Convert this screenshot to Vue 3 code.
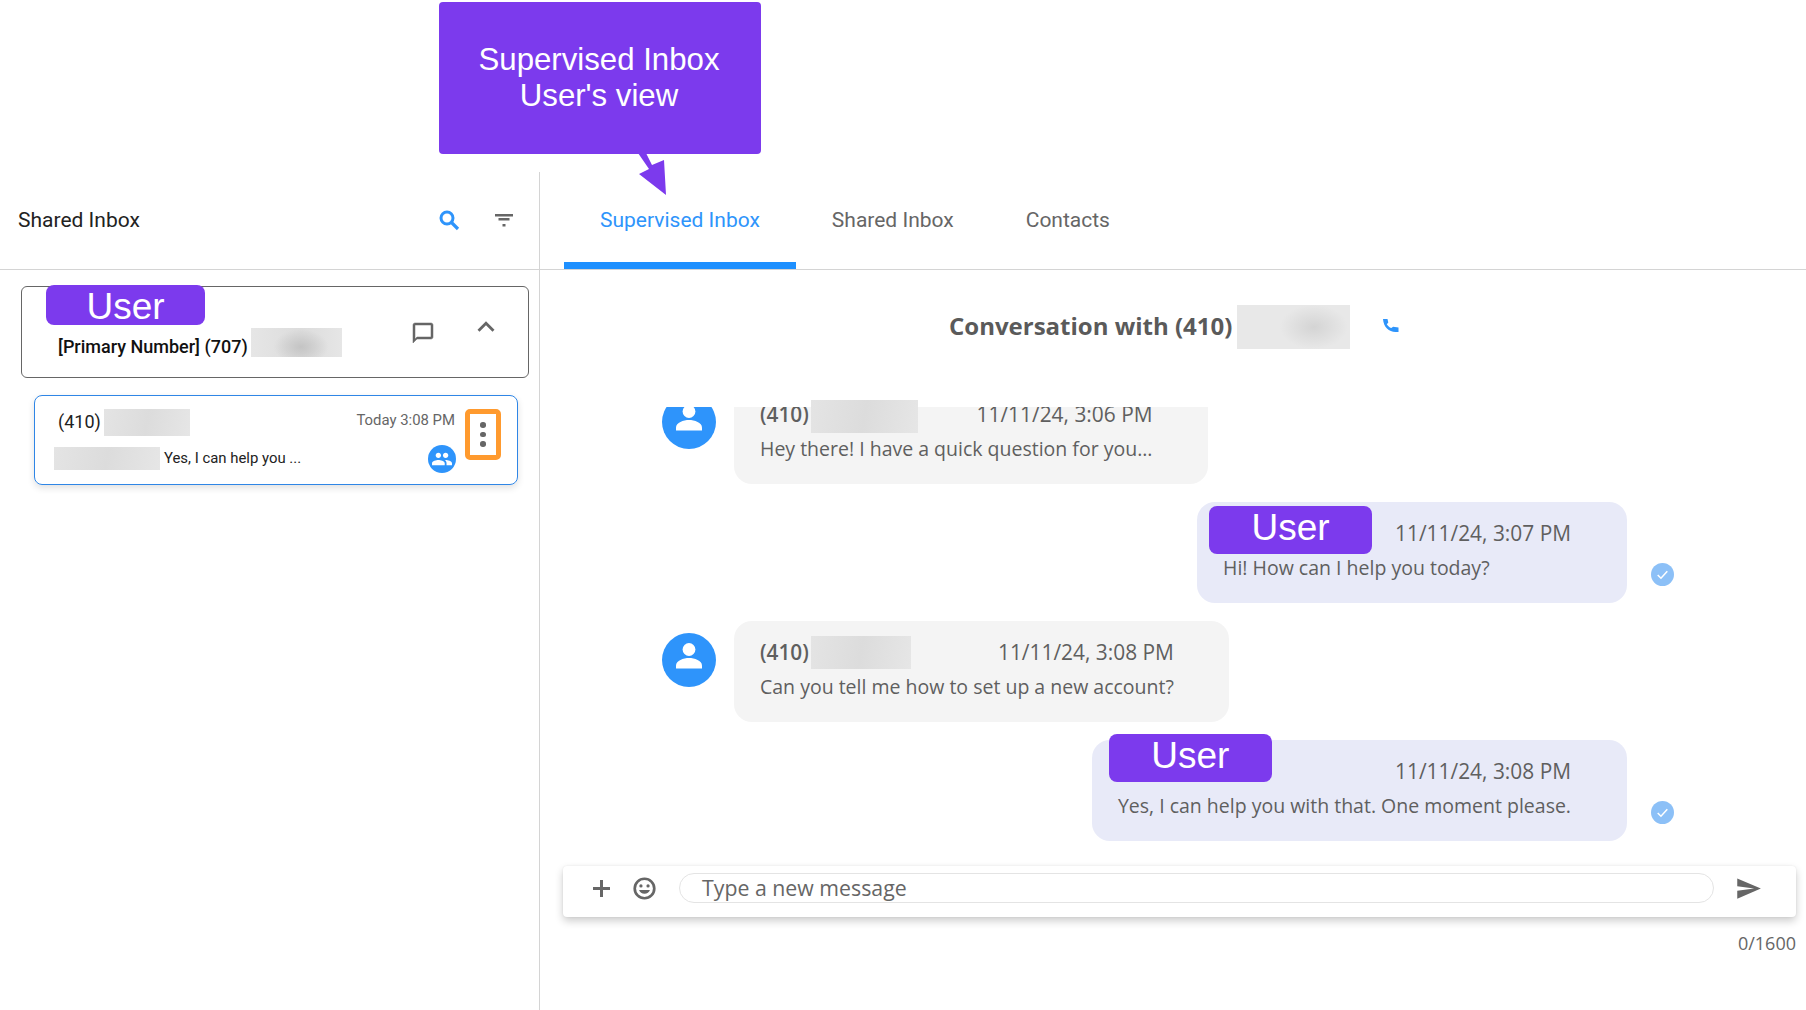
<template>
  <div class="page">
    <!-- annotation over the screenshot -->
    <div class="callout">Supervised Inbox<br>User's view</div>
    <svg class="callout-arrow" viewBox="0 0 40 44" width="40" height="44">
      <path d="M0 0H8L14 12 26 7 28 42 1 21 11 16Z" fill="#7c3aed" />
    </svg>

    <aside class="side">
      <header class="side-head">
        <span class="side-title">Shared Inbox</span>
        <div class="side-tools">
          <svg class="icon" viewBox="0 0 24 24">
            <circle cx="10" cy="10" r="6" fill="none" stroke="#2e94fb" stroke-width="3" />
            <path d="M14.5 14.5l6.5 6.5" stroke="#2e94fb" stroke-width="3.2" />
          </svg>
          <svg class="icon" viewBox="0 0 24 24"><path fill="#666" d="M10.5 18.5h3v-2.6h-3v2.6zM3 6v2.6h18V6H3zm3.5 6.6h11v-2.6h-11v2.6z" /></svg>
        </div>
      </header>

      <section class="number-box">
        <span class="badge badge-box">User</span>
        <div class="number-row">
          <span class="number-text">[Primary Number] (707)</span>
          <span class="redact redact-number"></span>
        </div>
        <div class="number-actions">
          <svg class="icon chat-icon" viewBox="0 0 24 24"><path fill="#666" stroke="#666" stroke-width=".5" d="M20 2H4c-1.1 0-2 .9-2 2v18l4-4h14c1.1 0 2-.9 2-2V4c0-1.1-.9-2-2-2zm0 14H6l-2 2V4h16v12z" /></svg>
          <svg class="chevron" viewBox="0 0 24 24"><path fill="#666" d="M12 8l-6 6 1.41 1.41L12 10.83l4.59 4.58L18 14z" /></svg>
        </div>
      </section>

      <article class="conv-card">
        <div class="conv-body">
          <div class="conv-top">
            <span class="conv-name">(410)</span>
            <span class="redact redact-name"></span>
            <span class="conv-time">Today 3:08 PM</span>
          </div>
          <div class="conv-bottom">
            <span class="redact redact-sender"></span>
            <span class="conv-preview">Yes, I can help you ...</span>
            <svg class="group-icon" viewBox="0 0 27 27">
              <circle cx="13.5" cy="13.5" r="13.5" fill="#2e94fb" />
              <path transform="translate(3 3) scale(.875)" fill="#fff" d="M16 11c1.66 0 2.99-1.34 2.99-3S17.66 5 16 5c-1.66 0-3 1.34-3 3s1.34 3 3 3zm-8 0c1.66 0 2.99-1.34 2.99-3S9.66 5 8 5C6.34 5 5 6.34 5 8s1.34 3 3 3zm0 2c-2.33 0-7 1.17-7 3.5V19h14v-2.5c0-2.33-4.67-3.5-7-3.5zm8 0c-.29 0-.62.02-.97.05 1.16.84 1.97 1.97 1.97 3.45V19h6v-2.5c0-2.33-4.67-3.5-7-3.5z" />
            </svg>
          </div>
        </div>
        <div class="kebab"><i></i><i></i><i></i></div>
      </article>
    </aside>

    <main class="main">
      <nav class="tabs">
        <a
          v-for="tab in tabs"
          :key="tab"
          class="tab"
          :class="{ active: tab === 'Supervised Inbox' }"
        >{{ tab }}</a>
      </nav>

      <div class="conv-title">
        <span class="title-text">Conversation with (410)</span>
        <span class="redact redact-title"></span>
        <svg class="phone" viewBox="0 0 16 14"><path fill="#2e94fb" d="M0 1h4.5l.8 3.5-1.5 1.8c1.2 2 2.5 3 4.5 3.8l1.8-1.3 5.4.8V14h-3C6 14 .5 9 0 1z" /></svg>
      </div>

      <div class="thread-wrap">
        <!-- redaction box pokes out above the scroll clip -->
        <span class="redact redact-first"></span>
        <div class="thread">
          <div
            v-for="msg in messages"
            :key="msg.time + msg.text"
            class="row"
            :class="msg.mine ? 'mine' : 'theirs'"
          >
            <svg v-if="!msg.mine" class="avatar" viewBox="0 0 54 54">
              <circle cx="27" cy="27" r="27" fill="#2e94fb" />
              <circle cx="27" cy="16.5" r="6.4" fill="#fff" />
              <path fill="#fff" d="M14 35.5v-3c0-5 7.500-7.500 13-7.500s13 2.500 13 7.500v3z" />
            </svg>
            <div class="bubble" :class="msg.cls">
              <span v-if="msg.mine" class="badge badge-msg">User</span>
              <div class="bubble-head">
                <template v-if="!msg.mine">
                  <span class="sender">(410)</span>
                  <span class="redact" :class="msg.redact"></span>
                </template>
                <span class="stamp">{{ msg.time }}</span>
              </div>
              <p class="bubble-text">{{ msg.text }}</p>
            </div>
            <svg v-if="msg.mine" class="tick" viewBox="0 0 24 24">
              <circle cx="12" cy="12" r="12" fill="#8cc0f7" />
              <path d="M7 12.5l3.400 3.400L17 8.600" fill="none" stroke="#fff" stroke-width="1.6" />
            </svg>
          </div>
        </div>
      </div>

      <div class="composer">
        <svg class="add" viewBox="0 0 17 17"><path fill="#666" d="M7 0h3v7h7v3h-7v7H7v-7H0V7h7z" /></svg>
        <svg class="emoji" viewBox="0 0 24 24">
          <circle cx="12" cy="12" r="10.2" fill="none" stroke="#666" stroke-width="2.800" />
          <circle cx="8.300" cy="9.300" r="1.700" fill="#666" />
          <circle cx="15.700" cy="9.300" r="1.700" fill="#666" />
          <path fill="#666" d="M6.300 13.600h11.400c-.8 2.400-3 4-5.700 4s-4.900-1.600-5.700-4z" />
        </svg>
        <div class="composer-input">Type a new message</div>
        <svg class="send" viewBox="0 0 24 24"><path fill="#666" d="M2.010 21L23 12 2.010 3 2 10l15 2-15 2z" /></svg>
      </div>
      <div class="counter">0/1600</div>
    </main>
  </div>
</template>

<script setup>
const tabs = ['Supervised Inbox', 'Shared Inbox', 'Contacts']

const messages = [
  { time: '11/11/24, 3:06 PM', text: 'Hey there! I have a quick question for you...', redact: 'redact-gap-a', cls: 'clipped' },
  { time: '11/11/24, 3:07 PM', text: 'Hi! How can I help you today?', mine: true, cls: 'wide-head' },
  { time: '11/11/24, 3:08 PM', text: 'Can you tell me how to set up a new account?', redact: 'redact-gap-b' },
  { time: '11/11/24, 3:08 PM', text: 'Yes, I can help you with that. One moment please.', mine: true }
]
</script>

<style scoped>
.page {
  position: relative;
  display: flex;
  width: 100%;
  height: 1010px;
  padding-top: 172px;
  box-sizing: border-box;
  overflow: hidden;
  background: #fff;
  font-family: Roboto, sans-serif;
}

.callout {
  position: absolute;
  left: 439px;
  top: 2px;
  width: 322px;
  height: 152px;
  padding-right: 2px;
  box-sizing: border-box;
  display: flex;
  align-items: center;
  justify-content: center;
  text-align: center;
  background: #7c3aed;
  border-radius: 4px;
  color: #fff;
  font: 31.2px/36px "Liberation Sans", sans-serif;
}

.callout-arrow {
  position: absolute;
  left: 638px;
  top: 153px;
}

.badge {
  position: absolute;
  display: flex;
  align-items: center;
  justify-content: center;
  background: #7c3aed;
  border-radius: 8px;
  color: #fff;
  font: 37px/1 "Liberation Sans", sans-serif;
}

.redact {
  display: block;
  flex: none;
  background: linear-gradient(100deg, #e4e4e4, #dcdcdc 50%, #e6e6e6);
}

/* left column */
.side {
  width: 540px;
  flex: none;
  box-sizing: border-box;
  border-right: 1px solid #d4d4d4;
}

.side-head {
  height: 98px;
  box-sizing: border-box;
  border-bottom: 1px solid #d4d4d4;
  display: flex;
  align-items: center;
  padding: 0 23px 2px 18px;
}

.side-title {
  font-size: 21px;
  color: #222;
}

.side-tools {
  display: flex;
  gap: 31px;
  margin-left: auto;
}

.icon {
  width: 24px;
  height: 24px;
  display: block;
}

.number-box {
  position: relative;
  display: flex;
  align-items: flex-start;
  margin: 16px 0 0 21px;
  width: 508px;
  height: 92px;
  box-sizing: border-box;
  padding: 23px 25px 0 36px;
  border: 1px solid #666;
  border-radius: 6px;
}

.badge-box {
  left: 24px;
  top: -2px;
  width: 159px;
  height: 40px;
  padding-top: 2px;
  box-sizing: border-box;
}

.number-row {
  display: flex;
  align-items: flex-end;
  gap: 3px;
  margin-top: 18px;
}

.number-text {
  position: relative;
  top: 2px;
  font-size: 18px;
  line-height: 24px;
  font-weight: 500;
  color: #111;
}

.redact-number {
  width: 91px;
  height: 29px;
  background:
    radial-gradient(ellipse 30% 60% at 55% 65%, #c4c4c4, rgba(196, 196, 196, 0)),
    linear-gradient(90deg, #e6e6e6, #dcdcdc 55%, #e6e6e6);
}

.number-actions {
  display: flex;
  align-items: flex-start;
  gap: 34px;
  margin-left: auto;
}

.chat-icon {
  margin-top: 11px;
}

.chevron {
  width: 34px;
  height: 34px;
  display: block;
}

.conv-card {
  display: flex;
  margin: 17px 0 0 34px;
  width: 484px;
  height: 90px;
  box-sizing: border-box;
  padding: 13px 16px 0 19px;
  border: 1px solid #2f86e6;
  border-radius: 8px;
  box-shadow: 0 3px 7px rgba(0, 0, 0, .12);
}

.conv-body {
  flex: 1;
  margin-right: 10px;
}

.conv-top {
  display: flex;
  align-items: center;
  height: 27px;
  padding-left: 4px;
}

.conv-name {
  position: relative;
  top: -1px;
  font-size: 18px;
  color: #222;
}

.redact-name {
  width: 86px;
  height: 27px;
  margin-left: 3px;
}

.conv-time {
  margin-left: auto;
  margin-top: -6px;
  font-size: 14.9px;
  color: #666;
}

.conv-bottom {
  display: flex;
  align-items: center;
  height: 27px;
  margin-top: 9px;
}

.redact-sender {
  width: 106px;
  height: 23px;
}

.conv-preview {
  position: relative;
  top: -1px;
  margin-left: 4px;
  font-size: 14.9px;
  color: #222;
}

.group-icon {
  width: 28px;
  height: 28px;
  margin-left: auto;
  margin-right: -1px;
}

.kebab {
  width: 36px;
  height: 51px;
  box-sizing: border-box;
  border: 5px solid #ff9a2e;
  border-radius: 5px;
  display: flex;
  flex-direction: column;
  align-items: center;
  justify-content: center;
  gap: 4px;
}

.kebab i {
  width: 5.5px;
  height: 5.5px;
  border-radius: 50%;
  background: #666;
}

/* right column */
.main {
  flex: 1;
  min-width: 0;
  display: flex;
  flex-direction: column;
  font-family: "Open Sans", sans-serif;
  color: #5f5f5f;
}

.tabs {
  display: flex;
  height: 98px;
  box-sizing: border-box;
  padding-left: 24px;
  border-bottom: 1px solid #d4d4d4;
}

.tab {
  display: flex;
  align-items: center;
  height: 97px;
  box-sizing: border-box;
  padding: 0 36px 2px;
  font-family: Roboto, sans-serif;
  font-size: 21px;
  color: #666;
}

.tab.active {
  color: #2e94fb;
  border-bottom: 7px solid #1e90ff;
  padding-top: 7px;
}

.conv-title {
  height: 114px;
  display: flex;
  align-items: center;
  padding-left: 409px;
  flex: none;
}

.title-text {
  position: relative;
  top: -2px;
  font-size: 24px;
  font-weight: 700;
  color: #5a5a5a;
}

.redact-title {
  width: 113px;
  height: 44px;
  margin: 0 0 0 5px;
  background:
    radial-gradient(ellipse 30% 50% at 68% 50%, #d4d4d4, rgba(212, 212, 212, 0)),
    #e8e8e8;
}

.phone {
  width: 16px;
  height: 14px;
  margin: -4px 0 0 33px;
}

.thread-wrap {
  position: relative;
  flex: none;
  margin: 23px 10px 0 23px;
}

.redact-first {
  position: absolute;
  left: 248px;
  top: -7px;
  width: 107px;
  height: 33px;
  z-index: 1;
}

.thread {
  height: 459px;
  overflow: hidden;
}

.row {
  display: flex;
  align-items: flex-start;
  margin-bottom: 18px;
}

.row.theirs {
  padding-left: 99px;
}

.row.mine {
  justify-content: flex-end;
  padding-right: 122px;
}

.row:first-child {
  margin-top: -24px;
}

.avatar {
  width: 54px;
  height: 54px;
  flex: none;
  margin: 12px 18px 0 0;
}

.tick {
  width: 23px;
  height: 23px;
  flex: none;
  margin: 61px 0 0 24px;
}

.bubble {
  position: relative;
  height: 101px;
  box-sizing: border-box;
  padding: 16px 55px 0 26px;
  border-radius: 18px;
  background: #f4f4f4;
}

.mine .bubble {
  background: #e8eaf8;
  padding-left: 26px;
  padding-right: 56px;
}

.badge-msg {
  left: 17px;
  top: -6px;
  width: 163px;
  height: 48px;
  padding-bottom: 5px;
  box-sizing: border-box;
}

.wide-head .badge-msg {
  left: 12px;
  top: 4px;
}

.bubble-head {
  display: flex;
  align-items: center;
  justify-content: flex-end;
  height: 30px;
  margin-bottom: 2px;
  font-size: 20.9px;
}

.wide-head .bubble-head {
  padding-left: 172px;
}

.sender {
  font-weight: 600;
  font-size: 20.8px;
}

.sender + .redact {
  margin: 0 auto 0 2px;
}

.redact-gap-a {
  width: 0;
  height: 0;
}

.redact-gap-b {
  width: 100px;
  height: 33px;
}

.stamp {
  white-space: nowrap;
}

.bubble-text {
  margin: 4px 0 0;
  font-size: 19.5px;
  line-height: 32px;
  white-space: nowrap;
}

.composer {
  flex: none;
  display: flex;
  align-items: center;
  height: 51px;
  margin: 0 10px 0 23px;
  padding: 0 34px 7px 30px;
  box-sizing: border-box;
  background: #fff;
  border-radius: 4px;
  box-shadow: 0 4px 8px rgba(0, 0, 0, .2), 0 0 2px rgba(0, 0, 0, .08);
}

.add {
  width: 17px;
  height: 17px;
}

.emoji {
  width: 23px;
  height: 23px;
  margin-left: 23px;
}

.composer-input {
  flex: 1;
  height: 30px;
  margin-left: 23px;
  padding-left: 22px;
  box-sizing: border-box;
  border: 1px solid #e4e4e4;
  border-radius: 15px;
  font-size: 21.3px;
  line-height: 27px;
  color: #666;
}

.send {
  width: 27px;
  height: 27px;
  margin-left: 21px;
}

.counter {
  flex: none;
  margin: 14px 10px 0 0;
  text-align: right;
  font-size: 18px;
  color: #666;
}
</style>
